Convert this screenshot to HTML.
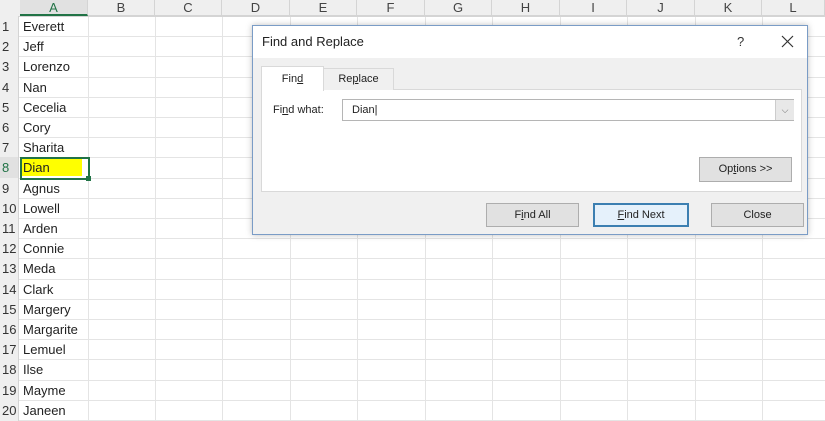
<!DOCTYPE html>
<html><head><style>
body{margin:0;width:825px;height:420px;overflow:hidden;background:#fff;font-family:"Liberation Sans",sans-serif;position:relative}
.a{position:absolute}
.hdr{top:0;height:16px;background:#efefef;border-bottom:1px solid #d4d4d4;font-size:13px;color:#444;text-align:center;line-height:16px}
.rn{left:0;width:19px;background:#efefef;border-right:1px solid #d4d4d4;font-size:13px;color:#333;text-align:left;padding-left:2px;box-sizing:border-box}
.cell{left:23px;font-size:13px;color:#222}
.hl{position:absolute;left:0;width:825px;height:1px;background:#e4e4e4}
.vl{position:absolute;top:0;width:1px;height:420px;background:#e4e4e4}
.btn{position:absolute;background:#e1e1e1;border:1px solid #adadad;font-size:11px;color:#222;text-align:center;box-sizing:border-box}
</style></head><body>
<div id="g"></div>
<script>
var g=document.getElementById('g'),h='';
var cols=[20,88,155,222,290,357,425,492,560,627,695,762];
var L=['A','B','C','D','E','F','G','H','I','J','K','L'];
for(var i=1;i<=20;i++){var y=16+i*20.2;h+='<div class="hl" style="top:'+Math.round(y)+'px"></div>';}
for(var j=1;j<cols.length;j++)h+='<div class="vl" style="left:'+cols[j]+'px"></div>';
h+='<div class="a hdr" style="left:0;width:825px"></div>';
for(var j=0;j<cols.length;j++){var w=(cols[j+1]||825)-cols[j];h+='<div class="a hdr" style="left:'+cols[j]+'px;width:'+w+'px;border-right:1px solid #d4d4d4;box-sizing:border-box;'+(j==0?'background:#e1e1e1;color:#217346;border-bottom:2px solid #217346':'')+'">'+L[j]+'</div>';}
var n=['Everett','Jeff','Lorenzo','Nan','Cecelia','Cory','Sharita','Dian','Agnus','Lowell','Arden','Connie','Meda','Clark','Margery','Margarite','Lemuel','Ilse','Mayme','Janeen'];
for(var i=0;i<20;i++){var y=Math.round(16+i*20.2);h+='<div class="a rn" style="top:'+y+'px;height:21px;line-height:21px;'+(i==7?'background:#e1e1e1;color:#217346':'')+'">'+(i+1)+'</div>';
h+='<div class="a cell" style="top:'+y+'px;line-height:21px">'+n[i]+'</div>';}
h+='<div class="a" style="left:20px;top:157px;width:66px;height:19px;border:2px solid #217346;box-sizing:content-box"></div><div class="a" style="left:22px;top:159px;width:60px;height:17px;background:#ffff00"></div><div class="a cell" style="top:158px;line-height:20px">Dian</div><div class="a" style="left:86px;top:176px;width:5px;height:5px;background:#217346"></div>';
g.innerHTML=h;
</script>
<div class="a" style="left:252px;top:25px;width:556px;height:210px;background:#f0f0f0;border:1px solid #7a9cc6;box-sizing:border-box;box-shadow:0 0 6px rgba(0,0,0,.25)">
<div class="a" style="left:0;top:0;width:554px;height:32px;background:#fff;font-size:13px;color:#222;line-height:32px;padding-left:9px;box-sizing:border-box">Find and Replace</div>
<div class="a" style="left:484px;top:8px;font-size:13px;color:#333">?</div>
<svg class="a" style="left:528px;top:9px" width="13" height="13"><path d="M1 1L12 12M12 1L1 12" stroke="#333" stroke-width="1.2"/></svg>
<div class="a" style="left:8px;top:63px;width:541px;height:103px;background:#fff;border:1px solid #d9d9d9;box-sizing:border-box"></div>
<div class="a" style="left:70px;top:42px;width:71px;height:22px;border:1px solid #d9d9d9;border-bottom:none;background:#f0f0f0;font-size:11px;text-align:center;line-height:21px;color:#222;box-sizing:border-box">Re<u>p</u>lace</div>
<div class="a" style="left:8px;top:40px;width:63px;height:25px;background:#fff;border:1px solid #d9d9d9;border-bottom:none;font-size:11px;text-align:center;line-height:24px;color:#222;box-sizing:border-box">Fin<u>d</u></div>
<div class="a" style="left:20px;top:78px;font-size:11px;color:#222">Fi<u>n</u>d what:</div>
<div class="a" style="left:89px;top:73px;width:452px;height:22px;border:1px solid #b5b5b5;background:#fff;box-sizing:border-box;font-size:11px;line-height:20px;padding-left:9px;color:#222">Dian|</div>
<div class="a" style="left:522px;top:74px;width:18px;height:20px;background:#e8e8e8;border-left:1px solid #ccc;font-size:9px;text-align:center;line-height:20px;color:#666">⌵</div>
<div class="btn" style="left:446px;top:131px;width:93px;height:25px;line-height:23px">Op<u>t</u>ions &gt;&gt;</div>
<div class="btn" style="left:233px;top:177px;width:93px;height:24px;line-height:22px">F<u>i</u>nd All</div>
<div class="btn" style="left:340px;top:177px;width:96px;height:24px;line-height:20px;border:2px solid #3c7fb1;background:#e5f1fb"><u>F</u>ind Next</div>
<div class="btn" style="left:458px;top:177px;width:93px;height:24px;line-height:22px">Close</div>
</div>
</body></html>
